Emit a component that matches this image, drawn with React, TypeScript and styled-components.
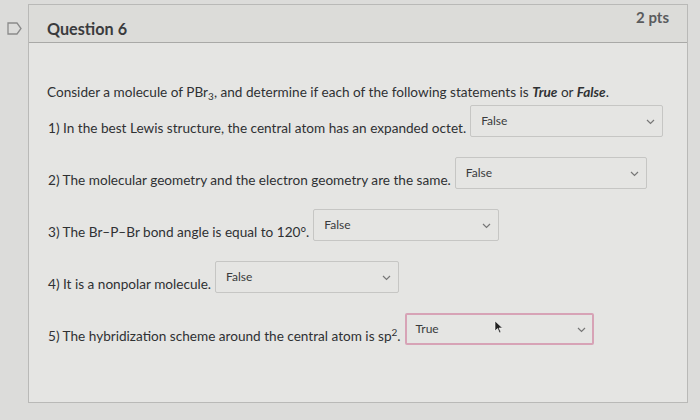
import React from "react"
import styled, { createGlobalStyle } from "styled-components"

const Global = createGlobalStyle`
  html, body {
    margin: 0;
    padding: 0;
    background: #dcdcda;
    font-family: Lato, "Open Sans", sans-serif;
    color: #2f3133;
  }
`

const Page = styled.div`
  display: flex;
  width: 700px;
  height: 420px;
  padding-top: 4px;
  box-sizing: border-box;
  overflow: hidden;
`

const Gutter = styled.div`
  width: 28px;
  flex: none;
  display: flex;
  justify-content: center;
  padding-top: 18px;
  box-sizing: border-box;
`

const Card = styled.div`
  width: 660px;
  height: 399px;
  border: 1px solid #b9b9b7;
  background: #e5e5e3;
  display: flex;
  flex-direction: column;
  box-sizing: border-box;
`

const Header = styled.div`
  height: 37px;
  background: #dcdcd9;
  border-bottom: 1px solid #a9a9a7;
  display: flex;
  justify-content: space-between;
  padding: 0 18px 0 18px;
`

const Title = styled.div`
  font-weight: 700;
  font-size: 16.2px;
  color: #3a3b3d;
  padding-top: 14px;
`

const Points = styled.div`
  font-weight: 700;
  font-size: 15px;
  color: #5a5b5d;
  padding-top: 3px;
`

const Body = styled.div`
  padding: 41px 18px 0 18px;
  display: flex;
  flex-direction: column;
  gap: 20px;
`

const Intro = styled.div`
  font-size: 13.6px;
  margin-bottom: -15px;
  sub {
    font-size: 10px;
    vertical-align: -3px;
    line-height: 0;
  }
  em {
    font-weight: 700;
  }
`

const Row = styled.div`
  display: flex;
  align-items: flex-end;
  height: 32px;
  padding-left: 1px;
`

const Label = styled.span`
  font-size: 13.6px;
  padding-bottom: 1px;
  white-space: nowrap;
  sup {
    font-size: 10px;
    vertical-align: 5px;
    line-height: 0;
  }
`

const Select = styled.div<{ $w: number; $active?: boolean }>`
  width: ${(p) => p.$w}px;
  height: 32px;
  margin-left: 4px;
  box-sizing: border-box;
  border: ${(p) => (p.$active ? "2px solid #d7a3b6" : "1px solid #c6c6c4")};
  border-radius: 2px;
  display: flex;
  justify-content: space-between;
  align-items: flex-start;
  padding: ${(p) => (p.$active ? "6px 6px 0 9px" : "7px 7px 0 10px")};
  font-size: 12px;
  color: #3a3b3d;
  position: relative;
`

const Chevron = styled.svg`
  margin-top: 6px;
`

const Cursor = styled.svg`
  position: absolute;
  left: 87px;
  top: 5px;
`

const Flag = () => (
  <svg width="15" height="13" viewBox="0 0 15 13">
    <path d="M1 1 H10 L14 6.5 L10 12 H1 Z" fill="none" stroke="#8a8a8a" strokeWidth="1.3" />
  </svg>
)

const Dropdown = ({ w, value, active }: { w: number; value: string; active?: boolean }) => (
  <Select $w={w} $active={active}>
    <span>{value}</span>
    <Chevron width="9" height="6" viewBox="0 0 9 6">
      <path d="M1 1 L4.5 4.5 L8 1" fill="none" stroke="#777" strokeWidth="1.2" />
    </Chevron>
    {active && (
      <Cursor width="10" height="14" viewBox="0 0 10 14">
        <path d="M1 1 L1 11 L3.5 8.5 L5.5 13 L7 12.3 L5 8 L8.5 8 Z" fill="#222" stroke="#fff" strokeWidth="0.6" />
      </Cursor>
    )}
  </Select>
)

const questions: { text: React.ReactNode; w: number; value: string; active?: boolean }[] = [
  { text: "1) In the best Lewis structure, the central atom has an expanded octet.", w: 193, value: "False" },
  { text: "2) The molecular geometry and the electron geometry are the same.", w: 192, value: "False" },
  { text: "3) The Br\u2013P\u2013Br bond angle is equal to 120°.", w: 186, value: "False" },
  { text: "4) It is a nonpolar molecule.", w: 184, value: "False" },
  {
    text: (
      <>
        5) The hybridization scheme around the central atom is sp<sup>2</sup>.
      </>
    ),
    w: 189,
    value: "True",
    active: true,
  },
]

export default function App() {
  return (
    <>
      <Global />
      <Page>
        <Gutter>
          <Flag />
        </Gutter>
        <Card>
          <Header>
            <Title>Question 6</Title>
            <Points>2 pts</Points>
          </Header>
          <Body>
            <Intro>
              Consider a molecule of PBr<sub>3</sub>, and determine if each of the following statements is{" "}
              <em>True</em> or <em>False</em>.
            </Intro>
            {questions.map((q, i) => (
              <Row key={i}>
                <Label>{q.text}</Label>
                <Dropdown w={q.w} value={q.value} active={q.active} />
              </Row>
            ))}
          </Body>
        </Card>
      </Page>
    </>
  )
}
